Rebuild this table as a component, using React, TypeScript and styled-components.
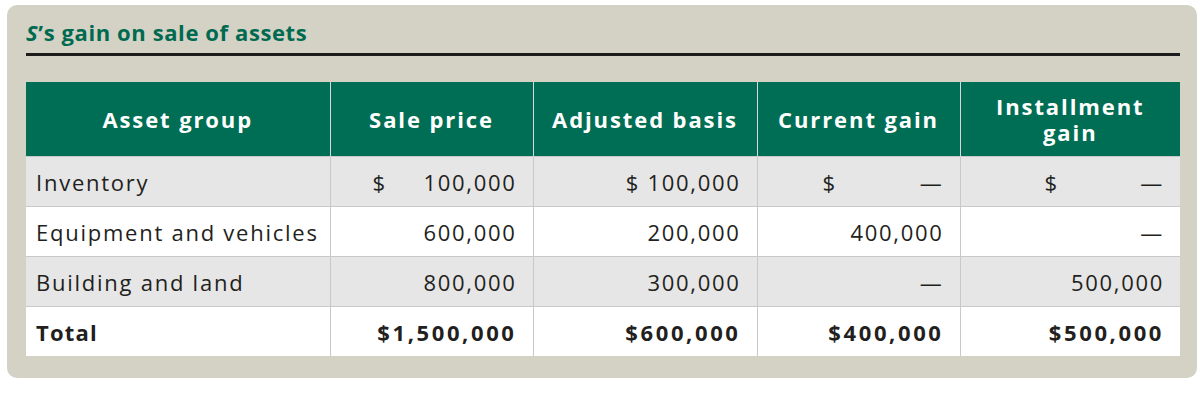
import React from "react";
import styled, { createGlobalStyle } from "styled-components";

const GlobalStyle = createGlobalStyle`
  body {
    margin: 0;
    background: #ffffff;
    font-family: "Open Sans", "Noto Sans", sans-serif;
  }
`;

interface Row {
  label: string;
  sale: string;
  basis: string;
  current: string;
  installment: string;
  saleDollar?: boolean;
  currentDollar?: boolean;
  installmentDollar?: boolean;
}

const rows: Row[] = [
  {
    label: "Inventory",
    sale: "100,000",
    basis: "$ 100,000",
    current: "—",
    installment: "—",
    saleDollar: true,
    currentDollar: true,
    installmentDollar: true,
  },
  {
    label: "Equipment and vehicles",
    sale: "600,000",
    basis: "200,000",
    current: "400,000",
    installment: "—",
  },
  {
    label: "Building and land",
    sale: "800,000",
    basis: "300,000",
    current: "—",
    installment: "500,000",
  },
];

const App: React.FC = () => {
  return (
    <>
      <GlobalStyle />
      <Panel>
        <Title>
          <em>S</em>’s gain on sale of assets
        </Title>
        <Rule />
        <Table>
          <colgroup>
            <col style={{ width: 304 }} />
            <col style={{ width: 203 }} />
            <col style={{ width: 224 }} />
            <col style={{ width: 203 }} />
            <col style={{ width: 220 }} />
          </colgroup>
          <thead>
            <tr>
              <Th>Asset group</Th>
              <Th>Sale price</Th>
              <Th>Adjusted basis</Th>
              <Th>Current gain</Th>
              <Th>
                <HeadLine>Installment</HeadLine>
                <HeadLine>gain</HeadLine>
              </Th>
            </tr>
          </thead>
          <tbody>
            {rows.map((r, i) => (
              <BodyRow key={r.label} $shaded={i % 2 === 0}>
                <LabelCell>{r.label}</LabelCell>
                <NumCell>
                  <Amount $dollarAt={r.saleDollar ? 34 : undefined}>
                    {r.saleDollar && <span>$</span>}
                    <span>{r.sale}</span>
                  </Amount>
                </NumCell>
                <NumCell>{r.basis}</NumCell>
                <NumCell>
                  <Amount $dollarAt={r.currentDollar ? 57 : undefined}>
                    {r.currentDollar && <span>$</span>}
                    <span>{r.current}</span>
                  </Amount>
                </NumCell>
                <NumCell>
                  <Amount $dollarAt={r.installmentDollar ? 76 : undefined}>
                    {r.installmentDollar && <span>$</span>}
                    <span>{r.installment}</span>
                  </Amount>
                </NumCell>
              </BodyRow>
            ))}
            <BodyRow $shaded={false}>
              <LabelCell $bold>Total</LabelCell>
              <NumCell $bold>$1,500,000</NumCell>
              <NumCell $bold>$600,000</NumCell>
              <NumCell $bold>$400,000</NumCell>
              <NumCell $bold>$500,000</NumCell>
            </BodyRow>
          </tbody>
        </Table>
      </Panel>
    </>
  );
};

const Panel = styled.div`
  margin: 5px 3px 0 7px;
  padding: 12px 17px 22px 19px;
  background: #d4d2c5;
  border-radius: 10px;
`;

const Title = styled.h2`
  margin: 0 0 6px 0;
  font-size: 22px;
  line-height: 30px;
  font-weight: 700;
  letter-spacing: 0.6px;
  color: #006a50;

  em {
    font-style: italic;
  }
`;

const Rule = styled.div`
  height: 3px;
  background: #1c1c1c;
  margin-bottom: 26px;
`;

const Table = styled.table`
  width: 1154px;
  border-collapse: collapse;
  table-layout: fixed;
`;

const Th = styled.th`
  height: 74px;
  padding: 0 8px;
  background: #006e54;
  color: #ffffff;
  font-size: 22px;
  line-height: 26px;
  font-weight: 700;
  letter-spacing: 1.9px;
  text-align: center;
  vertical-align: middle;
  border-left: 1px solid #d8d8d8;

  &:first-child {
    border-left: none;
  }
`;

const HeadLine = styled.div`
  line-height: 26px;
`;

const BodyRow = styled.tr<{ $shaded: boolean }>`
  background: ${(p) => (p.$shaded ? "#e6e6e6" : "#ffffff")};

  td {
    border-top: 1px solid #c9c9c9;
  }
`;

const LabelCell = styled.td<{ $bold?: boolean }>`
  height: 49px;
  padding: 0 8px 0 10px;
  font-size: 22px;
  font-weight: ${(p) => (p.$bold ? 700 : 400)};
  letter-spacing: ${(p) => (p.$bold ? "1.2px" : "1.75px")};
  color: #231f20;
  text-align: left;
  vertical-align: middle;
`;

const NumCell = styled.td<{ $bold?: boolean }>`
  height: 49px;
  padding: 0 16px 0 8px;
  font-size: 22px;
  font-weight: ${(p) => (p.$bold ? 700 : 400)};
  letter-spacing: ${(p) => (p.$bold ? "2.6px" : "1.7px")};
  color: #231f20;
  text-align: right;
  vertical-align: middle;
  border-left: 1px solid #c9c9c9;
`;

const Amount = styled.div<{ $dollarAt?: number }>`
  display: flex;
  justify-content: ${(p) => (p.$dollarAt !== undefined ? "space-between" : "flex-end")};
  padding-left: ${(p) => (p.$dollarAt !== undefined ? `${p.$dollarAt}px` : "0")};
`;

export default App;
